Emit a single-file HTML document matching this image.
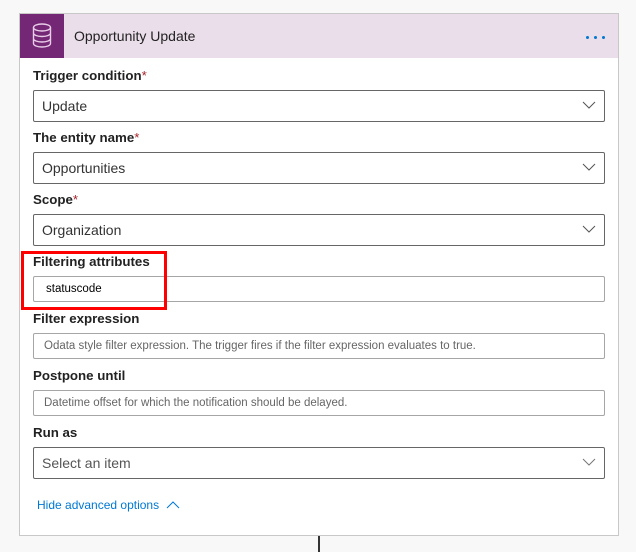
<!DOCTYPE html>
<html><head><meta charset="utf-8"><style>
*{box-sizing:border-box;margin:0;padding:0}
body{width:636px;height:552px;background:#f8f8f8;font-family:"Segoe UI","Liberation Sans",sans-serif;position:relative;overflow:hidden;color:#000}
.card{position:absolute;left:19px;top:13px;width:600px;height:523px;background:#fff;border:1px solid #c8c8c8}
.hdr{position:absolute;left:0;top:0;width:598px;height:44px;background:#eadeea}
.ico{position:absolute;left:0;top:0;width:44px;height:44px;background:#742774}
.title{position:absolute;left:54px;top:14px;font-size:14px;color:#222}
.dots{position:absolute;left:566px;top:22px;display:flex;gap:5px}
.dots i{display:block;width:3px;height:3px;background:#0078d4;border-radius:50%}
.lbl{position:absolute;left:33px;font-size:13.3px;font-weight:bold;color:#222}
.lbl span{color:#a4262c;font-weight:normal}
.box{position:absolute;left:33px;width:572px;border:1px solid #666;border-radius:2px;font-size:14px;color:#333;padding-left:8px}
.sm{height:26px;border-color:#a6a6a6;font-size:11.5px;line-height:24px;padding-left:10px;color:#666}
.big{height:32px;line-height:30px}
.chev{position:absolute;right:8px;top:9px}
.red{position:absolute;left:21px;top:251px;width:146px;height:59px;border:3px solid #f00}
</style></head><body>
<div class="card">
<div class="hdr"><div class="ico"><svg width="44" height="44"><g fill="none" stroke="#e8cde8" stroke-width="1.4"><ellipse cx="22" cy="13.5" rx="8.5" ry="3.5"/><path d="M13.5 13.5v16c0 2 3.8 3.5 8.5 3.5s8.5-1.5 8.5-3.5v-16M13.5 19c0 2 3.8 3.5 8.5 3.5s8.5-1.5 8.5-3.5M13.5 24.5c0 2 3.8 3.5 8.5 3.5s8.5-1.5 8.5-3.5"/></g></svg></div>
<div class="title">Opportunity Update</div>
<div class="dots"><i></i><i></i><i></i></div></div>
</div>
<div class="lbl" style="top:68px">Trigger condition<span>*</span></div>
<div class="box big" style="top:90px">Update<svg class="chev" width="14" height="10"><path d="M1 2l6 6 6-6" fill="none" stroke="#555"/></svg></div>
<div class="lbl" style="top:130px">The entity name<span>*</span></div>
<div class="box big" style="top:152px">Opportunities<svg class="chev" width="14" height="10"><path d="M1 2l6 6 6-6" fill="none" stroke="#555"/></svg></div>
<div class="lbl" style="top:192px">Scope<span>*</span></div>
<div class="box big" style="top:214px">Organization<svg class="chev" width="14" height="10"><path d="M1 2l6 6 6-6" fill="none" stroke="#555"/></svg></div>
<div class="lbl" style="top:254px">Filtering attributes</div>
<div class="box sm" style="top:276px;color:#000;padding-left:12px">statuscode</div>
<div class="lbl" style="top:311px">Filter expression</div>
<div class="box sm" style="top:333px">Odata style filter expression. The trigger fires if the filter expression evaluates to true.</div>
<div class="lbl" style="top:368px">Postpone until</div>
<div class="box sm" style="top:390px">Datetime offset for which the notification should be delayed.</div>
<div class="lbl" style="top:425px">Run as</div>
<div class="box big" style="top:447px;color:#555">Select an item<svg class="chev" width="14" height="10"><path d="M1 2l6 6 6-6" fill="none" stroke="#777"/></svg></div>
<div style="position:absolute;left:37px;top:498px;font-size:12px;color:#0078d4">Hide advanced options <svg width="14" height="9" style="margin-left:4px"><path d="M1 8l6-6 6 6" fill="none" stroke="#0078d4"/></svg></div>
<div class="red"></div>
<div style="position:absolute;left:318px;top:536px;width:2px;height:16px;background:#333"></div>
</body></html>
